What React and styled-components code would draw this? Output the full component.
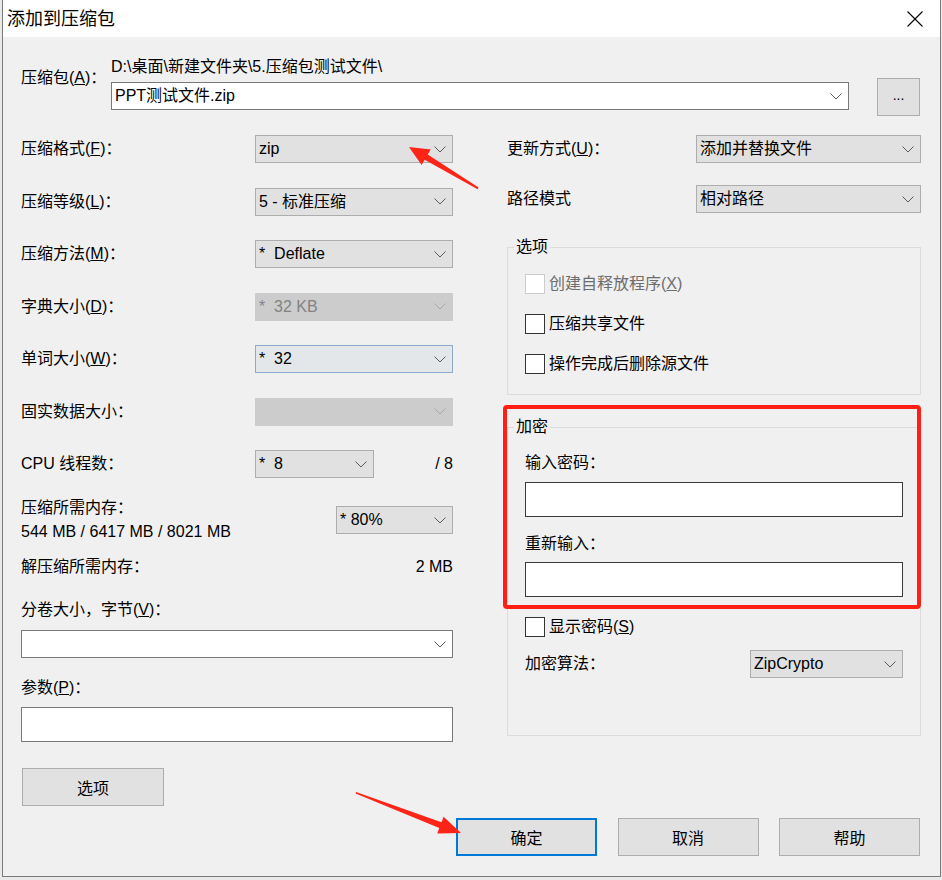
import React from "react";
import styled, { createGlobalStyle, css } from "styled-components";

const GlobalStyle = createGlobalStyle`
  html, body { margin: 0; padding: 0; background: #e9e9e9; }
  body {
    font-family: "Liberation Sans", "Noto Sans CJK SC", sans-serif;
    font-size: 16px;
    color: #000;
  }
  *, *::before, *::after { box-sizing: border-box; }
`;

const Page = styled.div`
  position: relative;
  width: 942px;
  height: 880px;
  overflow: hidden;
`;

const Window = styled.div`
  margin-left: 2px;
  width: 939px;
  height: 877px;
  border: 1px solid #7a7a7a;
  border-top: none;
  background: #f0f0f0;
  display: flex;
  flex-direction: column;
`;

const TitleBar = styled.div`
  height: 37px;
  flex: none;
  background: #fff;
  display: flex;
  align-items: center;
  justify-content: space-between;
  padding: 0 17px 0 4px;
`;

const Title = styled.div`
  font-size: 18px;
  line-height: 24px;
`;

const CloseIcon = styled.svg`
  width: 16px;
  height: 16px;
  display: block;
`;

const Body = styled.div`
  padding: 20px 19px 0 18px;
  display: flex;
  flex-direction: column;
`;

const ArchiveRow = styled.div`
  display: flex;
  align-items: flex-start;
`;

const ArchiveLabel = styled.div`
  width: 90px;
  padding-top: 11px;
  line-height: 20px;
  white-space: nowrap;
`;

const ArchiveField = styled.div`
  width: 738px;
  display: flex;
  flex-direction: column;
  gap: 5px;
`;

const PathText = styled.div`
  line-height: 20px;
  white-space: nowrap;
`;

const variants = {
  gray: css`
    background: #e1e1e1;
    border-color: #adadad;
    color: #000;
  `,
  white: css`
    background: #fff;
    border-color: #7a7a7a;
    color: #000;
  `,
  disabled: css`
    background: #cccccc;
    border-color: #cccccc;
    color: #838383;
  `,
  hot: css`
    background: #e4e7ea;
    border-color: #8eaacb;
    color: #000;
  `,
};

const ComboBox = styled.div`
  display: flex;
  align-items: center;
  justify-content: space-between;
  height: 28px;
  width: ${(p) => (p.$w ? `${p.$w}px` : "100%")};
  padding: 0 6px 0 3px;
  border: 1px solid;
  line-height: 20px;
  white-space: pre;
  flex: none;
  ${(p) => variants[p.$variant || "gray"]}
`;

const ChevronSvg = styled.svg`
  width: 12px;
  height: 7px;
  display: block;
  flex: none;
`;

const Chevron = ({ light }) => (
  <ChevronSvg viewBox="0 0 12 7">
    <polyline
      points="0.5,0.5 6,6 11.5,0.5"
      fill="none"
      stroke={light ? "#a9a9a9" : "#5a5a5a"}
      strokeWidth="1"
    />
  </ChevronSvg>
);

const Combo = ({ value, variant, w }) => (
  <ComboBox $variant={variant} $w={w}>
    <span>{value}</span>
    <Chevron light={variant === "disabled"} />
  </ComboBox>
);

const BrowseButton = styled.button`
  margin-left: 28px;
  margin-top: 21px;
  width: 43px;
  height: 38px;
  background: #e1e1e1;
  border: 1px solid #adadad;
  font: inherit;
  font-size: 14px;
  padding: 0 0 4px;
  color: #000;
`;

const MainGrid = styled.div`
  margin-top: 19px;
  display: grid;
  grid-template-columns: 432px 414px;
  column-gap: 54px;
  align-items: start;
`;

const Column = styled.div`
  display: flex;
  flex-direction: column;
`;

const FieldStack = styled.div`
  display: flex;
  flex-direction: column;
  gap: ${(p) => p.$gap}px;
`;

const FieldRow = styled.div`
  display: grid;
  grid-template-columns: ${(p) => p.$cols};
  align-items: center;
  height: 28px;
  white-space: nowrap;
  line-height: 20px;
`;

const RightValue = styled.span`
  text-align: right;
`;

const MemoryBlock = styled.div`
  margin-top: 18px;
  display: flex;
  align-items: center;
  justify-content: space-between;
`;

const MemoryText = styled.div`
  line-height: 24px;
  white-space: nowrap;
`;

const InfoRow = styled.div`
  margin-top: ${(p) => p.$mt}px;
  display: flex;
  justify-content: space-between;
  line-height: 20px;
  white-space: nowrap;
`;

const Spaced = styled.div`
  margin-top: ${(p) => p.$mt}px;
`;

const TextInput = styled.div`
  margin-top: ${(p) => p.$mt}px;
  height: 35px;
  width: 100%;
  background: #fff;
  border: 1px solid ${(p) => (p.$dark ? "#3a3a3a" : "#7a7a7a")};
`;

const Button = styled.button`
  width: ${(p) => p.$w}px;
  height: 38px;
  background: #e1e1e1;
  border: ${(p) => (p.$primary ? "2px solid #0078d7" : "1px solid #adadad")};
  font: inherit;
  color: #000;
  padding: 0;
  flex: none;
`;

const OptionsButton = styled(Button)`
  margin-top: 26px;
  margin-left: 1px;
`;

const Group = styled.fieldset`
  margin: ${(p) => p.$mt || 0}px 0 0;
  padding: 0;
  min-width: 0;
  border: 1px solid #dcdcdc;
`;

const Legend = styled.legend`
  margin-left: 6px;
  padding: 0 2px;
  line-height: 20px;
`;

const GroupBody = styled.div`
  padding: ${(p) => p.$pad};
  display: flex;
  flex-direction: column;
`;

const CheckList = styled.div`
  display: flex;
  flex-direction: column;
  gap: 20px;
`;

const CheckRow = styled.div`
  margin-top: ${(p) => p.$mt || 0}px;
  display: flex;
  align-items: center;
  gap: 4px;
  height: 20px;
  line-height: 20px;
  white-space: nowrap;
  color: ${(p) => (p.$disabled ? "#6d6d6d" : "#000")};
`;

const Box = styled.span`
  width: 20px;
  height: 20px;
  flex: none;
  background: #fff;
  border: 1px solid ${(p) => (p.$disabled ? "#cccccc" : "#333333")};
`;

const HighlightWrap = styled.div`
  position: relative;
  margin-top: 22px;
`;

const Highlight = styled.div`
  position: absolute;
  left: -4px;
  top: -12px;
  width: 418px;
  height: 204px;
  border: 4px solid #ff1f14;
  border-radius: 4px;
  pointer-events: none;
`;

const BottomRow = styled.div`
  margin-top: 12px;
  padding-right: 1px;
  display: flex;
  justify-content: flex-end;
  gap: 20.5px;
`;

const ArrowLayer = styled.svg`
  position: absolute;
  left: 0;
  top: 0;
  width: 942px;
  height: 880px;
  pointer-events: none;
`;

const Key = ({ k }) => (
  <>
    (<u>{k}</u>)
  </>
);

export default function App() {
  return (
    <>
      <GlobalStyle />
      <Page>
        <Window>
          <TitleBar>
            <Title>添加到压缩包</Title>
            <CloseIcon viewBox="0 0 16 16">
              <line x1="0.5" y1="0.5" x2="15.5" y2="15.5" stroke="#000" strokeWidth="1.1" />
              <line x1="15.5" y1="0.5" x2="0.5" y2="15.5" stroke="#000" strokeWidth="1.1" />
            </CloseIcon>
          </TitleBar>
          <Body>
            <ArchiveRow>
              <ArchiveLabel>
                压缩包<Key k="A" />：
              </ArchiveLabel>
              <ArchiveField>
                <PathText>D:\桌面\新建文件夹\5.压缩包测试文件\</PathText>
                <Combo value="PPT测试文件.zip" variant="white" />
              </ArchiveField>
              <BrowseButton>...</BrowseButton>
            </ArchiveRow>

            <MainGrid>
              <Column>
                <FieldStack $gap={24.5}>
                  <FieldRow $cols="234px 198px">
                    <span>压缩格式<Key k="F" />：</span>
                    <Combo value="zip" />
                  </FieldRow>
                  <FieldRow $cols="234px 198px">
                    <span>压缩等级<Key k="L" />：</span>
                    <Combo value="5 - 标准压缩" />
                  </FieldRow>
                  <FieldRow $cols="234px 198px">
                    <span>压缩方法<Key k="M" />：</span>
                    <Combo value="*  Deflate" />
                  </FieldRow>
                  <FieldRow $cols="234px 198px">
                    <span>字典大小<Key k="D" />：</span>
                    <Combo value="*  32 KB" variant="disabled" />
                  </FieldRow>
                  <FieldRow $cols="234px 198px">
                    <span>单词大小<Key k="W" />：</span>
                    <Combo value="*  32" variant="hot" />
                  </FieldRow>
                  <FieldRow $cols="234px 198px">
                    <span>固实数据大小：</span>
                    <Combo value="" variant="disabled" />
                  </FieldRow>
                  <FieldRow $cols="234px 119px 1fr">
                    <span>CPU 线程数：</span>
                    <Combo value="*  8" />
                    <RightValue>/ 8</RightValue>
                  </FieldRow>
                </FieldStack>

                <MemoryBlock>
                  <div>
                    <MemoryText>压缩所需内存：</MemoryText>
                    <MemoryText>544 MB / 6417 MB / 8021 MB</MemoryText>
                  </div>
                  <Combo value="* 80%" w={117} />
                </MemoryBlock>

                <InfoRow $mt={13}>
                  <span>解压缩所需内存：</span>
                  <span>2 MB</span>
                </InfoRow>

                <InfoRow $mt={23}>
                  <span>分卷大小，字节<Key k="V" />：</span>
                </InfoRow>
                <Spaced $mt={10}>
                  <Combo value="" variant="white" />
                </Spaced>

                <InfoRow $mt={20}>
                  <span>参数<Key k="P" />：</span>
                </InfoRow>
                <TextInput $mt={9} />

                <OptionsButton $w={142}>选项</OptionsButton>
              </Column>

              <Column>
                <FieldStack $gap={22}>
                  <FieldRow $cols="189px 225px">
                    <span>更新方式<Key k="U" />：</span>
                    <Combo value="添加并替换文件" />
                  </FieldRow>
                  <FieldRow $cols="189px 225px">
                    <span>路径模式</span>
                    <Combo value="相对路径" />
                  </FieldRow>
                </FieldStack>

                <Group $mt={24}>
                  <Legend>选项</Legend>
                  <GroupBody $pad="17px 17px 20px">
                    <CheckList>
                      <CheckRow $disabled>
                        <Box $disabled />
                        <span>创建自释放程序<Key k="X" /></span>
                      </CheckRow>
                      <CheckRow>
                        <Box />
                        <span>压缩共享文件</span>
                      </CheckRow>
                      <CheckRow>
                        <Box />
                        <span>操作完成后删除源文件</span>
                      </CheckRow>
                    </CheckList>
                  </GroupBody>
                </Group>

                <HighlightWrap>
                  <Group>
                    <Legend>加密</Legend>
                    <GroupBody $pad="16px 17px 57px">
                      <InfoRow $mt={0}>
                        <span>输入密码：</span>
                      </InfoRow>
                      <TextInput $mt={9} $dark />
                      <InfoRow $mt={17}>
                        <span>重新输入：</span>
                      </InfoRow>
                      <TextInput $mt={8} $dark />
                      <CheckRow $mt={20}>
                        <Box />
                        <span>显示密码<Key k="S" /></span>
                      </CheckRow>
                      <Spaced $mt={13}>
                        <FieldRow $cols="225px 153px">
                          <span>加密算法：</span>
                          <Combo value="ZipCrypto" />
                        </FieldRow>
                      </Spaced>
                    </GroupBody>
                  </Group>
                  <Highlight />
                </HighlightWrap>
              </Column>
            </MainGrid>

            <BottomRow>
              <Button $w={141} $primary>确定</Button>
              <Button $w={141}>取消</Button>
              <Button $w={141}>帮助</Button>
            </BottomRow>
          </Body>
        </Window>

        <ArrowLayer viewBox="0 0 942 880">
          <polygon
            fill="#ff2418"
            points="478.6,187.6 427.7,154.6 430.8,149.5 409,147 421.6,164.9 424.7,159.8 477.6,189.3"
          />
          <polygon
            fill="#ff2418"
            points="356,792 441.5,822.3 443.6,816.7 461,833 437.2,833.5 439.3,827.9 355.6,793.6"
          />
        </ArrowLayer>
      </Page>
    </>
  );
}
